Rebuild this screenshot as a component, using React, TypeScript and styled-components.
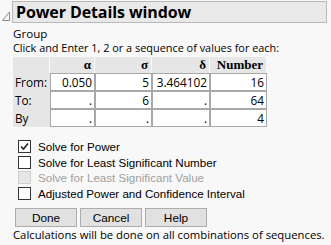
import React from 'react';
import styled, {createGlobalStyle} from 'styled-components';

const GlobalStyle = createGlobalStyle`
  html, body {
    margin: 0;
    padding: 0;
    background: #f8f8f8;
  }
  body {
    font-family: "Open Sans", "Liberation Sans", sans-serif;
    color: #000;
  }
`;

const Page = styled.div`
  width: 331px;
  height: 245px;
  padding: 1px 4px 0 2px;
  box-sizing: border-box;
  overflow: hidden;
`;

const HeaderRow = styled.div`
  display: flex;
  align-items: center;
  gap: 2px;
`;

const Disclosure = styled.svg`
  width: 8px;
  height: 10px;
  margin-top: 7px;
  flex: none;
`;

const TitleBox = styled.div`
  flex: 1;
  height: 20px;
  background: #e9e9e9;
  border: 1px solid #b9b9b9;
  display: flex;
  align-items: center;
  padding-left: 3px;
  font-size: 16px;
  font-weight: 700;
  letter-spacing: -0.1px;
`;

const Body = styled.div`
  padding-left: 11px;
`;

const Line = styled.div<{top?: number; size?: number}>`
  font-size: ${p => p.size ?? 11.6}px;
  line-height: 14px;
  margin-top: ${p => p.top ?? 0}px;
  white-space: nowrap;
`;

const Grid = styled.div`
  display: grid;
  grid-template-columns: 37px 45px 57px 58px 57px;
  grid-template-rows: 16px 18px 18px 18px;
  width: max-content;
  margin-top: 2px;
  font-size: 11.8px;
`;

const HeadCell = styled.div`
  background: #e6e6e6;
  border-right: 1px solid #fbfbfb;
  display: flex;
  align-items: center;
  justify-content: flex-end;
  padding-right: 3px;
  font-weight: 700;
  font-family: "Liberation Serif", "DejaVu Serif", serif;
  font-size: 13px;
  &:last-child {
    font-family: "Open Sans", "Liberation Sans", sans-serif;
    font-size: 12px;
  }
`;

const LabelCell = styled.div`
  background: #e6e6e6;
  display: flex;
  align-items: center;
  padding-left: 2px;
`;

const ValueCell = styled.div`
  background: #fff;
  border: 1px solid #a8a8a8;
  display: flex;
  align-items: center;
  justify-content: flex-end;
  padding-right: 2px;
`;

const Checks = styled.div`
  margin-top: 13px;
  padding-left: 5px;
  display: flex;
  flex-direction: column;
  gap: 2px;
  font-family: "Liberation Sans", "DejaVu Sans", sans-serif;
  font-size: 11.6px;
`;

const CheckRow = styled.label<{disabled?: boolean}>`
  display: flex;
  align-items: center;
  gap: 7px;
  height: 13.5px;
  color: ${p => (p.disabled ? '#a0a0a0' : '#000')};
`;

const Box = styled.span<{disabled?: boolean}>`
  width: 11px;
  height: 11px;
  border: 1px solid ${p => (p.disabled ? '#cfcfcf' : '#333')};
  background: ${p => (p.disabled ? '#e6e6e6' : '#fff')};
  display: flex;
  align-items: center;
  justify-content: center;
  flex: none;
`;

const Buttons = styled.div`
  display: flex;
  gap: 3px;
  margin-top: 8px;
  padding-left: 2px;
`;

const Button = styled.button`
  width: 62px;
  height: 19px;
  background: #e1e1e1;
  border: 1px solid #adadad;
  font-family: "Liberation Sans", "DejaVu Sans", sans-serif;
  font-size: 11.8px;
  color: #000;
  padding: 0;
`;

const rows = [
  {label: 'From:', values: ['0.050', '5', '3.464102', '16']},
  {label: 'To:', values: ['.', '6', '.', '64']},
  {label: 'By', values: ['.', '.', '.', '4']},
];

const checks = [
  {text: 'Solve for Power', checked: true},
  {text: 'Solve for Least Significant Number'},
  {text: 'Solve for Least Significant Value', disabled: true},
  {text: 'Adjusted Power and Confidence Interval'},
];

export default function App() {
  return (
    <Page>
      <GlobalStyle/>
      <HeaderRow>
        <Disclosure viewBox="0 0 8 10">
          <path d="M7.5 1 L7.5 9.5 L0.5 9.5 Z" fill="none" stroke="#8a8a8a" strokeWidth="1"/>
        </Disclosure>
        <TitleBox>Power Details window</TitleBox>
      </HeaderRow>
      <Body>
        <Line top={4}>Group</Line>
        <Line size={10.9}>Click and Enter 1, 2 or a sequence of values for each:</Line>
        <Grid>
          <HeadCell/>
          <HeadCell>α</HeadCell>
          <HeadCell>σ</HeadCell>
          <HeadCell>δ</HeadCell>
          <HeadCell>Number</HeadCell>
          {rows.map(r => (
            <React.Fragment key={r.label}>
              <LabelCell>{r.label}</LabelCell>
              {r.values.map((v, i) => <ValueCell key={i}>{v}</ValueCell>)}
            </React.Fragment>
          ))}
        </Grid>
        <Checks>
          {checks.map(c => (
            <CheckRow key={c.text} disabled={c.disabled}>
              <Box disabled={c.disabled}>
                {c.checked && (
                  <svg width="9" height="9" viewBox="0 0 9 9">
                    <path d="M1 4.5 L3.5 7 L8 1.5" fill="none" stroke="#222" strokeWidth="1.6"/>
                  </svg>
                )}
              </Box>
              {c.text}
            </CheckRow>
          ))}
        </Checks>
        <Buttons>
          <Button>Done</Button>
          <Button>Cancel</Button>
          <Button>Help</Button>
        </Buttons>
        <Line top={1} size={11.3}>Calculations will be done on all combinations of sequences.</Line>
      </Body>
    </Page>
  );
}
